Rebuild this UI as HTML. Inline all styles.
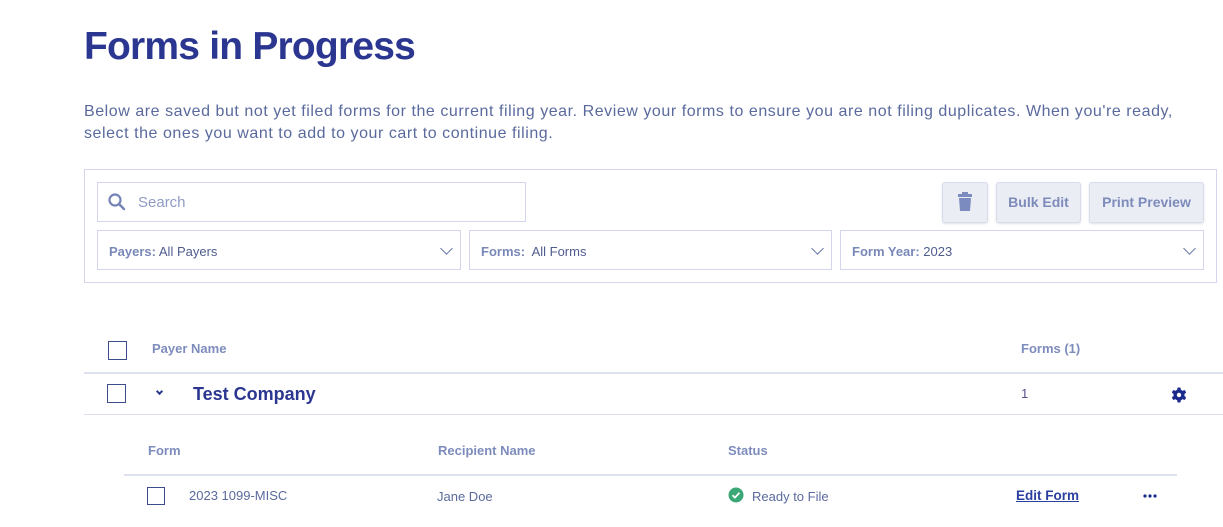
<!DOCTYPE html>
<html><head><style>
*{box-sizing:border-box;margin:0;padding:0}
body{width:1223px;height:527px;overflow:hidden;background:#fff;font-family:"Liberation Sans",sans-serif;position:relative;color:#5b6a9e}
.a{position:absolute}
h1{position:absolute;left:84px;top:25px;font-size:39px;font-weight:bold;color:#2b3690;letter-spacing:-0.8px}
.p{left:84px;top:101px;font-size:16px;line-height:22px;color:#5a6a9d;width:1110px;letter-spacing:0.55px}
.box{border:1px solid #d3d6ec}
.lbl{font-size:13px;color:#4f5c8f}
.lbl b{color:#7a88b8}
.btn{background:#ebedf5;border:1px solid #d8dcec;border-radius:3px;box-shadow:0 1px 2px rgba(0,0,0,.12);color:#7d8bbb;font-weight:bold;font-size:14px;text-align:center;line-height:38px}
.cb{border:1.5px solid #3d4d8c;width:19px;height:19px}
.hd{font-size:13px;font-weight:bold;color:#7d8cbc}
.chev{position:absolute;width:8px;height:8px;border-right:2px solid #6b7bb0;border-bottom:2px solid #6b7bb0;transform:rotate(45deg)}
</style></head><body>
<h1>Forms in Progress</h1>
<div class="a p">Below are saved but not yet filed forms for the current filing year. Review your forms to ensure you are not filing duplicates. When you're ready, select the ones you want to add to your cart to continue filing.</div>

<div class="a box" style="left:84px;top:169px;width:1133px;height:114px"></div>
<div class="a box" style="left:97px;top:182px;width:429px;height:40px"></div>
<svg class="a" style="left:107px;top:192px" width="20" height="20" viewBox="0 0 20 20"><circle cx="8" cy="8" r="5.5" fill="none" stroke="#7584b6" stroke-width="2.2"/><path d="M12 12l5 5" stroke="#7584b6" stroke-width="2.4" stroke-linecap="round"/></svg>
<div class="a" style="left:138px;top:194px;font-size:15px;color:#8f9cc6">Search</div>

<div class="a btn" style="left:942px;top:182px;width:46px;height:41px"><svg style="margin-top:9px" width="14" height="20" viewBox="0 0 14 20"><rect x="0" y="2" width="14" height="3" fill="#7b8bbf"/><rect x="4" y="0" width="6" height="3" fill="#7b8bbf"/><path d="M1 6h12l-1 13H2z" fill="#7b8bbf"/></svg></div>
<div class="a btn" style="left:996px;top:182px;width:85px;height:41px">Bulk Edit</div>
<div class="a btn" style="left:1089px;top:182px;width:115px;height:41px">Print Preview</div>

<div class="a box" style="left:97px;top:230px;width:364px;height:40px"><span class="a lbl" style="left:11px;top:13px"><b>Payers:</b> All Payers</span><div class="chev" style="left:344px;top:13px;width:9px;height:9px;border-width:1.6px"></div></div>
<div class="a box" style="left:469px;top:230px;width:363px;height:40px"><span class="a lbl" style="left:11px;top:13px"><b>Forms:</b>&nbsp; All Forms</span><div class="chev" style="left:343px;top:13px;width:9px;height:9px;border-width:1.6px"></div></div>
<div class="a box" style="left:840px;top:230px;width:364px;height:40px"><span class="a lbl" style="left:11px;top:13px"><b>Form Year:</b> 2023</span><div class="chev" style="left:344px;top:13px;width:9px;height:9px;border-width:1.6px"></div></div>

<div class="a cb" style="left:108px;top:341px"></div>
<div class="a hd" style="left:152px;top:341px">Payer Name</div>
<div class="a hd" style="left:1021px;top:341px">Forms (1)</div>
<div class="a" style="left:84px;top:372px;width:1139px;height:2px;background:#dde0ef"></div>

<div class="a cb" style="left:107px;top:384px"></div>
<div class="chev" style="left:157px;top:389px;width:5px;height:5px;border-color:#2b3690"></div>
<div class="a" style="left:193px;top:384px;font-size:18px;font-weight:bold;color:#2b3690">Test Company</div>
<div class="a" style="left:1021px;top:386px;font-size:13px;color:#5b4e8c">1</div>
<svg class="a" style="left:1171px;top:387px" width="16" height="16" viewBox="0 0 16 16"><g fill="#1a2a8c"><circle cx="8" cy="8" r="5.5"/><rect x="6.3" y="0.5" width="3.4" height="15" rx="1"/><rect x="6.3" y="0.5" width="3.4" height="15" rx="1" transform="rotate(60 8 8)"/><rect x="6.3" y="0.5" width="3.4" height="15" rx="1" transform="rotate(120 8 8)"/></g><circle cx="8" cy="8" r="2.2" fill="#fff"/></svg>
<div class="a" style="left:84px;top:414px;width:1139px;height:1px;background:#dde0ef"></div>

<div class="a hd" style="left:148px;top:443px">Form</div>
<div class="a hd" style="left:438px;top:443px">Recipient Name</div>
<div class="a hd" style="left:728px;top:443px">Status</div>
<div class="a" style="left:124px;top:474px;width:1053px;height:2px;background:#dde0ef"></div>

<div class="a cb" style="left:147px;top:487px;width:18px;height:18px"></div>
<div class="a" style="left:189px;top:488px;font-size:13px;color:#5b6a9e">2023 1099-MISC</div>
<div class="a" style="left:437px;top:489px;font-size:13px;color:#5b6a9e">Jane Doe</div>
<svg class="a" style="left:728px;top:487px" width="16" height="16" viewBox="0 0 16 16"><circle cx="8" cy="8" r="7.5" fill="#3aa876"/><path d="M4.5 8.2l2.4 2.4 4.6-4.8" fill="none" stroke="#fff" stroke-width="1.8"/></svg>
<div class="a" style="left:752px;top:489px;font-size:13px;color:#5b6a9e">Ready to File</div>
<div class="a" style="left:1016px;top:488px;font-size:13.5px;font-weight:bold;color:#2b3fa0;text-decoration:underline">Edit Form</div>
<svg class="a" style="left:1143px;top:494px" width="14" height="4"><circle cx="2" cy="2" r="1.6" fill="#1a2a8c"/><circle cx="7" cy="2" r="1.6" fill="#1a2a8c"/><circle cx="12" cy="2" r="1.6" fill="#1a2a8c"/></svg>
</body></html>
